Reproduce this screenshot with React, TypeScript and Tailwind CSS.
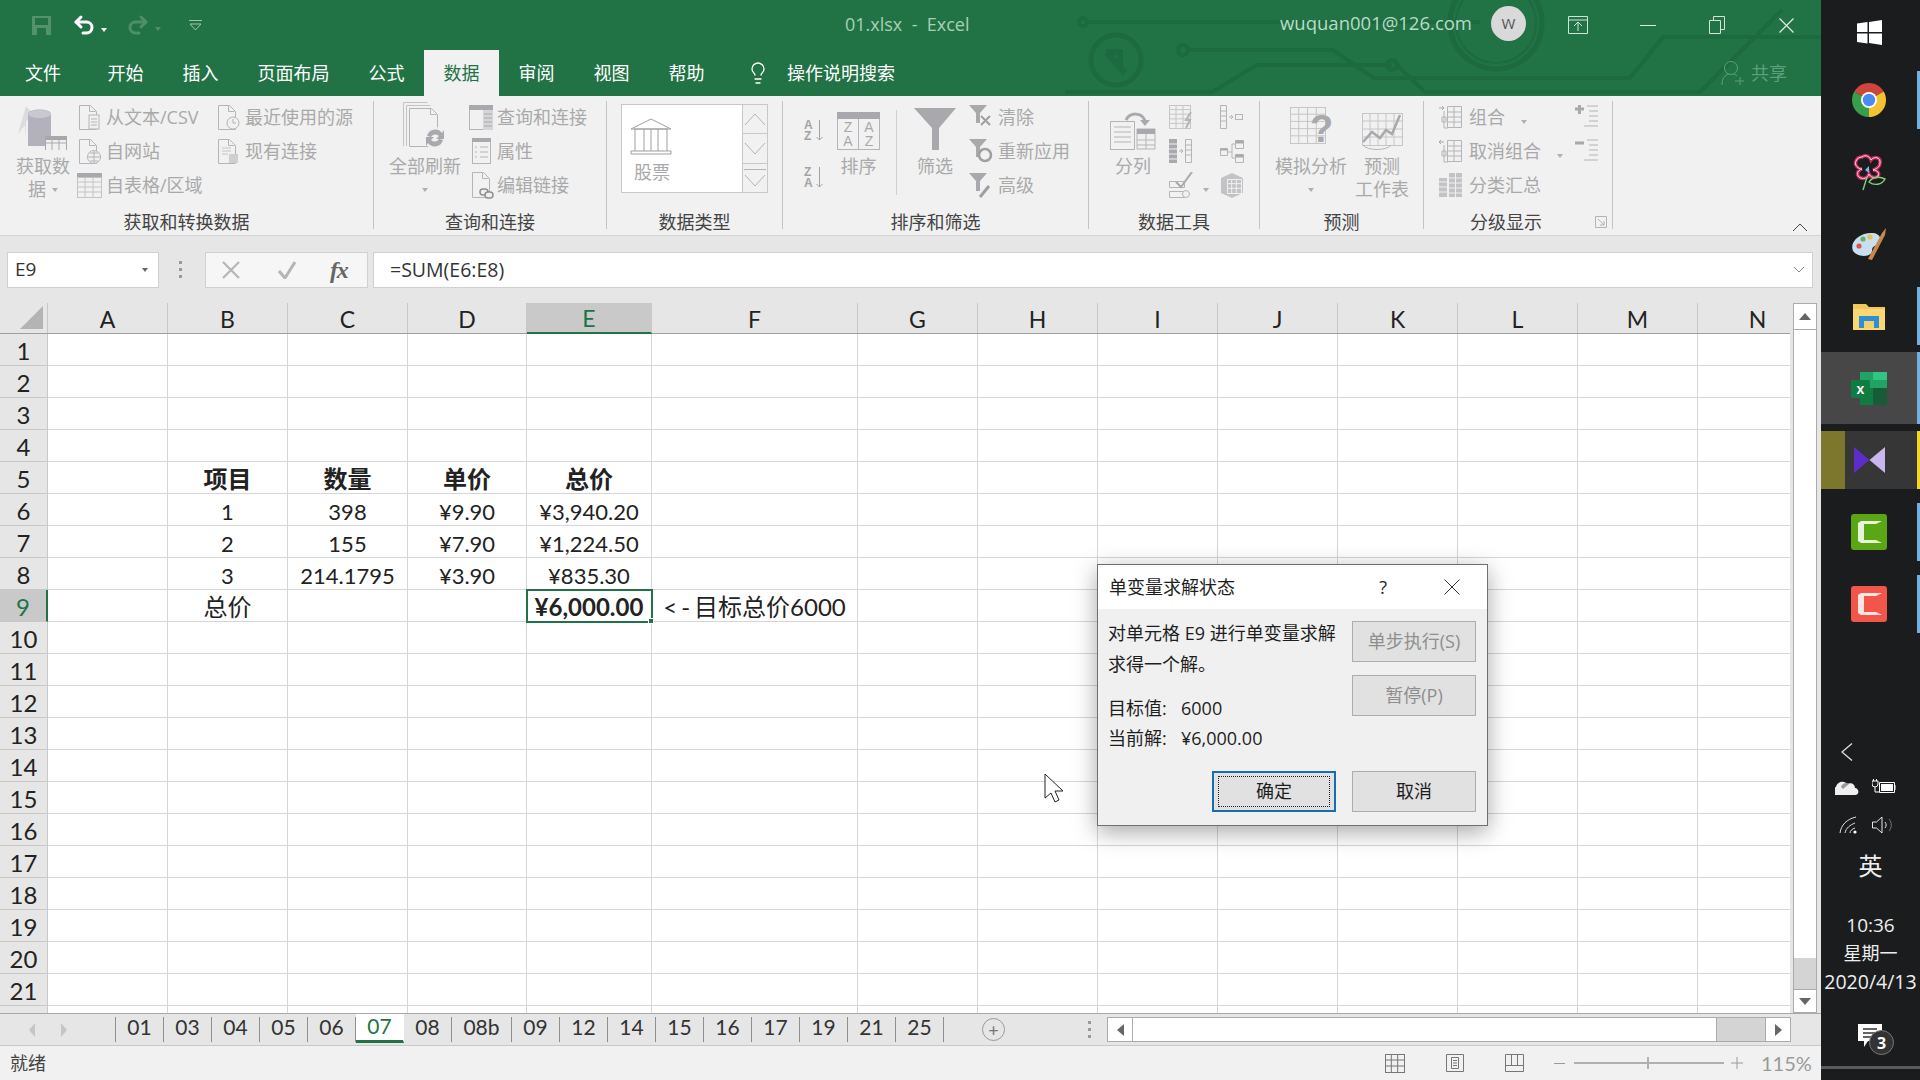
import type { ReactNode } from "react";
import { Lightbulb, Redo2, Undo2 } from "lucide-react";

const G = "#b5b5b8";
const L = "#c4c4c6";

function Svg({ w, h, children }: { w: number; h: number; children: ReactNode }) {
  return (
    <svg width={w} height={h} viewBox={`0 0 ${w} ${h}`} fill="none" className="block shrink-0">
      {children}
    </svg>
  );
}

function Page({ x = 0, y = 0, w = 17, h = 24, c = G }: { x?: number; y?: number; w?: number; h?: number; c?: string }) {
  return <path d={`M${x + 0.5} ${y + 0.5}h${w - 6}l6 6v${h - 6}h-${w}z M${x + w - 6.5} ${y + 0.5}v6h6`} stroke={c} />;
}

function Grid({ x, y, w, h, cols, rows, c = G }: { x: number; y: number; w: number; h: number; cols: number; rows: number; c?: string }) {
  const v = Array.from({ length: cols - 1 }, (_, i) => x + ((i + 1) * w) / cols);
  const r = Array.from({ length: rows - 1 }, (_, i) => y + ((i + 1) * h) / rows);
  return (
    <g stroke={c}>
      <rect x={x + 0.5} y={y + 0.5} width={w} height={h} />
      {v.map((n) => <path key={n} d={`M${n} ${y}v${h}`} />)}
      {r.map((n) => <path key={n} d={`M${x} ${n}h${w}`} />)}
    </g>
  );
}

function Caret({ c = "#b0b0b0" }: { c?: string }) {
  return <span className="inline-block w-0 h-0 border-x-[3.5px] border-x-transparent border-t-[4px]" style={{ borderTopColor: c }} />;
}

/* ribbon layout bits */
function Group({ className, label, children, launcher }: { className: string; label: string; children: ReactNode; launcher?: boolean }) {
  return (
    <div className={`${className} shrink-0 h-[128px] mt-[5px] border-r border-[#c4c4c4] flex flex-col`}>
      <div className="h-[102px] shrink-0 -mt-px flex">{children}</div>
      <div className="h-[27px] shrink-0 flex items-center pt-[13px] text-[18px] leading-none text-[#444]">
        <span className="flex-1 text-center">{label}</span>
        {launcher && (
          <span className="w-[24px] pl-[7px]">
            <Svg w={12} h={12}><path d="M.5.5h11v11H.5z M3 3l6 6 M9 5v4H5" stroke={G} /></Svg>
          </span>
        )}
      </div>
    </div>
  );
}

function Big({ className, icon, lines, caret }: { className: string; icon: ReactNode; lines: string[]; caret?: boolean }) {
  return (
    <div className={`${className} shrink-0 flex flex-col items-center text-[18px] leading-[23px] text-[#a9a9a9]`}>
      <div className="h-[55px] flex items-end justify-center pb-[5px]">{icon}</div>
      {lines.map((t) => (
        <span key={t} className="whitespace-nowrap flex items-center gap-[6px]">
          {t}
          {caret && t === lines[lines.length - 1] && lines.length > 1 && <Caret />}
        </span>
      ))}
      {caret && lines.length === 1 && <span className="h-[23px] flex items-center"><Caret /></span>}
    </div>
  );
}

function Col({ className, children }: { className: string; children: ReactNode }) {
  return <div className={`${className} shrink-0 flex flex-col`}>{children}</div>;
}

function Small({ box, icon, text, after }: { box: string; icon: ReactNode; text?: string; after?: ReactNode }) {
  return (
    <div className="h-[34px] flex items-center text-[18px] text-[#a9a9a9] whitespace-nowrap">
      <span className={`${box} shrink-0 flex items-center`}>{icon}</span>
      {text}
      {after}
    </div>
  );
}

/* ribbon icons */
const GetData = (
  <Svg w={50} h={44}>
    <path d="M8 0L0 28l7-9 1 14V16l7-9z" fill="#dcdcde" />
    <path d="M10 8c0-6 23-6 23 0v32H10z" fill="#b3b1bb" />
    <ellipse cx="21.5" cy="8" rx="11.5" ry="4" fill="#c9c8cf" />
    <rect x="27" y="30" width="22" height="14" fill="#f0f0f0" />
    <path d="M27 30h22v4H27z" fill="#a6a6ab" />
    <Grid x={27} y={30} w={21} h={14} cols={3} rows={2} c="#a9a9ad" />
  </Svg>
);
const DocLines = (
  <Svg w={22} h={26}>
    <Page x={0} y={1} w={17} h={24} />
    <rect x="10" y="11" width="10" height="14" fill="#f0f0f0" stroke={G} />
    <path d="M12 15h6M12 18h6M12 21h6" stroke={G} />
  </Svg>
);
const DocWeb = (
  <Svg w={22} h={26}>
    <Page x={0} y={1} w={17} h={24} />
    <circle cx="15" cy="19" r="6.5" fill="#f0f0f0" stroke={G} />
    <path d="M8.5 19h13M15 12.5v13M11 15h8M11 23h8" stroke={G} />
  </Svg>
);
const TableIcon = (
  <Svg w={25} h={25}>
    <rect x=".5" y=".5" width="24" height="24" stroke={G} />
    <path d="M0 0h25v4H0z" fill="#a9a9ad" />
    <Grid x={0} y={4} w={24} h={20} cols={3} rows={4} c={L} />
  </Svg>
);
const DocClock = (
  <Svg w={22} h={26}>
    <Page x={0} y={1} w={17} h={24} />
    <circle cx="15" cy="19" r="6" fill="#f0f0f0" stroke={G} />
    <path d="M15 15v4h3" stroke={G} />
  </Svg>
);
const DocDb = (
  <Svg w={22} h={26}>
    <Page x={0} y={1} w={17} h={24} />
    <path d="M4 10h9M4 13h9M4 16h6" stroke={L} />
    <path d="M11 16h9v9h-9z" fill="#cfcfd2" />
  </Svg>
);
const Refresh = (
  <Svg w={44} h={48}>
    <path d="M.5 44V.5h24M3.5 44V3.5h24" stroke={L} />
    <Page x={6} y={6} w={28} h={38} />
    <circle cx="32" cy="36" r="11" fill="#f0f0f0" />
    <path d="M24 34a8.5 8.5 0 0 1 15-3l2-3v9h-8l3-3a5 5 0 0 0-8 1zM40 38a8.5 8.5 0 0 1-15 3l-2 3v-9h8l-3 3a5 5 0 0 0 8-1z" fill="#a9a9ad" />
  </Svg>
);
const QueryIcon = (
  <Svg w={24} h={25}>
    <rect x=".5" y=".5" width="23" height="24" stroke={G} />
    <path d="M0 0h24v5H0z" fill="#a9a9ad" />
    <path d="M14 5h10v20H14z" fill="#d6d6d8" />
    <path d="M15 9h8M15 13h8M15 17h8M15 21h8" stroke="#a9a9ad" />
  </Svg>
);
const PropsIcon = (
  <Svg w={19} h={26}>
    <rect x=".5" y=".5" width="18" height="25" stroke={G} />
    <path d="M0 0h19v4H0z" fill="#a9a9ad" />
    <path d="M3 9h2M8 9h8M3 14h2M8 14h8M3 19h2M8 19h8" stroke={G} />
  </Svg>
);
const DocLink = (
  <Svg w={22} h={28}>
    <Page x={0} y={1} w={17} h={25} />
    <rect x="8" y="18" width="8" height="6" rx="3" fill="#f0f0f0" stroke="#8f8f92" strokeWidth="1.5" />
    <rect x="13" y="21" width="8" height="6" rx="3" fill="#f0f0f0" stroke="#8f8f92" strokeWidth="1.5" />
  </Svg>
);
const Bank = (
  <Svg w={42} h={38}>
    <path d="M1 11L21 1l20 10zM4 11h34M1 36h40v-3H1zM5 33V11M37 33V11M14 33V11M28 33V11M21 33V11" stroke="#9f9f9f" />
  </Svg>
);
function AZ({ top, bottom }: { top: string; bottom: string }) {
  return (
    <Svg w={20} h={24}>
      <text x="0" y="11" fontSize="12" fontWeight="700" fill="#a3a3a3" fontFamily="Liberation Sans, sans-serif">{top}</text>
      <text x="0" y="22" fontSize="12" fontWeight="700" fill="#a3a3a3" fontFamily="Liberation Sans, sans-serif">{bottom}</text>
      <path d="M15.5 2v20M12.5 19l3 3 3-3" stroke="#a3a3a3" />
    </Svg>
  );
}
const SortBig = (
  <Svg w={43} h={38}>
    <rect x=".5" y=".5" width="42" height="37" stroke={G} />
    <path d="M0 0h43v7H0z" fill="#a9a9ad" />
    <path d="M21.5 7v30" stroke={G} />
    <g fontSize="14" fill="#a9a9ad" fontFamily="Liberation Sans, sans-serif" textAnchor="middle">
      <text x="11" y="20">Z</text><text x="11" y="34">A</text><text x="32" y="20">A</text><text x="32" y="34">Z</text>
    </g>
  </Svg>
);
const Funnel = (
  <Svg w={42} h={42}>
    <path d="M0 0h42L25 20v22h-7V20z" fill="#a9a9ad" />
  </Svg>
);
function SmallFunnel({ children }: { children?: ReactNode }) {
  return (
    <Svg w={24} h={26}>
      <path d="M0 1h18l-7 8v10H7V9z" fill="#a9a9ad" />
      {children}
    </Svg>
  );
}
const SplitCols = (
  <Svg w={46} h={38}>
    <rect x=".5" y="9.5" width="24" height="28" stroke={G} />
    <path d="M4 15h17M4 20h17M4 25h17M4 30h17" stroke={G} />
    <path d="M16 8C20 0 32 0 35 9" stroke="#a9a9ad" strokeWidth="3" />
    <path d="M30 8h10l-5 6z" fill="#a9a9ad" />
    <rect x="27" y="17" width="18" height="20" fill="#f0f0f0" stroke={G} />
    <path d="M27 17h18v5H27z" fill="#a9a9ad" />
    <path d="M36 22v15M27 28h18M27 33h18" stroke={G} />
  </Svg>
);
const FlashFill = (
  <Svg w={24} h={26}>
    <Grid x={0} y={1} w={21} h={23} cols={3} rows={5} c="#c6c6c8" />
    <path d="M22 8l-5 8h4l-4 8" stroke={G} strokeWidth="2" />
  </Svg>
);
const RemoveDup = (
  <Svg w={24} h={26}>
    <path d="M0 1h8v24H0z" fill="#a9a9ad" />
    <path d="M0 6h8M0 11h8M0 16h8M0 21h8" stroke="#f0f0f0" />
    <path d="M16.5 1.5h6v23h-6zM16 7h7M16 12h7M16 17h7" stroke={G} />
    <path d="M10 13h4M12 11l2 2-2 2" stroke={G} />
  </Svg>
);
const Validate = (
  <Svg w={24} h={26}>
    <path d="M.5 9.5h15v6H.5zM.5 19.5h15v6H.5z" stroke={G} />
    <path d="M7 10l5 5L23 0" stroke="#a9a9ad" strokeWidth="2" />
    <circle cx="17" cy="22" r="3.5" fill="#f0f0f0" stroke={G} />
  </Svg>
);
const Consolidate = (
  <Svg w={24} h={26}>
    <path d="M.5 1.5h6v23h-6zM0 7h7M0 12h7M0 17h7" stroke={G} />
    <path d="M9 13h4M11 11l2 2-2 2" stroke={G} />
    <rect x="15.5" y="10.5" width="7" height="5" stroke={G} />
  </Svg>
);
const Relation = (
  <Svg w={24} h={26}>
    <path d="M.5 10.5h7v7h-7zM15.5 2.5h8v8h-8zM15.5 16.5h8v8h-8z" stroke={G} />
    <path d="M15.5 2.5h8v3h-8zM15.5 16.5h8v3h-8zM.5 10.5h7v2h-7z" fill="#a9a9ad" />
    <path d="M8 14h4V6h3M12 14v6h3" stroke={G} />
  </Svg>
);
const Cube = (
  <Svg w={24} h={26}>
    <path d="M12 1l11 5v15l-11 5-11-5V6z" fill="#c3c3c6" />
    <Grid x={7} y={7} w={14} h={14} cols={3} rows={3} c="#f0f0f0" />
  </Svg>
);
const WhatIf = (
  <Svg w={43} h={44}>
    <Grid x={0} y={1} w={35} h={36} cols={4} rows={5} c="#c6c6c8" />
    <text x="20" y="36" fontSize="38" fontWeight="700" fill="#a9a9ad" fontFamily="Liberation Sans, sans-serif">?</text>
  </Svg>
);
const Forecast = (
  <Svg w={41} h={38}>
    <Grid x={0} y={1} w={40} h={32} cols={5} rows={4} c="#c6c6c8" />
    <path d="M1 30l9-10 8 6 6-8 6 4 8-19" stroke="#a9a9ad" strokeWidth="2.5" />
    <path d="M1 33c4 6 24 6 28 0" stroke={G} />
  </Svg>
);
function Outline({ plus }: { plus?: boolean }) {
  return (
    <Svg w={24} h={24}>
      <path d={plus ? "M0 3h5M3 1l2 2-2 2" : "M5 3H0M2 1L0 3l2 2"} stroke="#a9a9ad" />
      <path d="M8.5 1.5h14v21h-14zM15 1v22M9 7h14M9 12h14M9 17h14" stroke={G} />
      <path d="M5 6v17h4M3 12h4v5H3z" stroke={G} />
    </Svg>
  );
}
function Outline2({ plus }: { plus?: boolean }) {
  return (
    <Svg w={24} h={24}>
      {plus ? <path d="M0 4h9M4.5 0v9" stroke="#a9a9ad" strokeWidth="3" /> : <path d="M0 4h9" stroke="#a9a9ad" strokeWidth="3" />}
      <path d="M12 1h11M14 6h9M14 11h9M14 16h9M9 21h14" stroke={G} />
    </Svg>
  );
}
const Subtotal = (
  <Svg w={24} h={26}>
    <path d="M0 6h8v19H0z" fill="#c3c3c6" />
    <path d="M0 10h8M0 15h8M0 20h8" stroke="#f0f0f0" />
    <path d="M10 1h13v24H10z" fill="#c3c3c6" />
    <path d="M16.5 1v24M10 6h13M10 11h13M10 16h13M10 21h13" stroke="#f0f0f0" />
  </Svg>
);

function ArrowBtn({ dir, extra }: { dir: "up" | "down"; extra?: boolean }) {
  return (
    <div className={`flex-1 border-b border-[#c8c8c8] last:border-b-0 flex flex-col items-center justify-center ${extra ? "gap-[3px]" : ""}`}>
      {extra && <span className="w-[22px] h-px bg-[#b5b5b5]" />}
      <Svg w={24} h={14}><path d={dir === "up" ? "M2 13L12 2l10 11" : "M2 2l10 11L22 2"} stroke={G} /></Svg>
    </div>
  );
}

function Ribbon() {
  return (
    <div className="h-[140px] bg-[#f1f1f1] border-b border-[#d4d4d4] flex">
      <Group className="w-[374px]" label="获取和转换数据">
        <Big className="w-[54px] ml-[16px]" icon={GetData} lines={["获取数", "据"]} caret />
        <Col className="w-[139px] ml-[9px]">
          <Small box="w-[27px]" icon={DocLines} text="从文本/CSV" />
          <Small box="w-[27px]" icon={DocWeb} text="自网站" />
          <Small box="w-[27px] -ml-[2px] mr-[2px]" icon={TableIcon} text="自表格/区域" />
        </Col>
        <Col className="w-[130px]">
          <Small box="w-[27px]" icon={DocClock} text="最近使用的源" />
          <Small box="w-[27px]" icon={DocDb} text="现有连接" />
        </Col>
      </Group>
      <Group className="w-[233px]" label="查询和连接">
        <Big className="w-[72px] ml-[15px]" icon={Refresh} lines={["全部刷新"]} caret />
        <Col className="w-[125px] ml-[8px]">
          <Small box="w-[28px]" icon={QueryIcon} text="查询和连接" />
          <Small box="w-[28px] pl-[3px]" icon={PropsIcon} text="属性" />
          <Small box="w-[28px] pl-[3px]" icon={DocLink} text="编辑链接" />
        </Col>
      </Group>
      <Group className="w-[176px]" label="数据类型">
        <div className="ml-[14px] mt-[4px] h-[89px] w-[147px] flex">
          <div className="w-[122px] h-full bg-white border border-[#c8c8c8] flex flex-col items-start pl-[8px] pt-[13px] text-[18px] leading-[23px] text-[#a9a9a9]">
            {Bank}
            <span className="mt-[5px] ml-[4px]">股票</span>
          </div>
          <div className="w-[25px] h-full border border-l-0 border-[#c8c8c8] flex flex-col">
            <ArrowBtn dir="up" />
            <ArrowBtn dir="down" />
            <ArrowBtn dir="down" extra />
          </div>
        </div>
      </Group>
      <Group className="w-[306px]" label="排序和筛选">
        <div className="ml-[21px] mt-[18px] w-[20px] shrink-0 flex flex-col gap-[23px]">
          <AZ top="A" bottom="Z" />
          <AZ top="Z" bottom="A" />
        </div>
        <Big className="w-[43px] ml-[13px]" icon={SortBig} lines={["排序"]} />
        <div className="w-px h-[85px] mt-[10px] ml-[16px] bg-[#d0d0d0] shrink-0" />
        <Big className="w-[42px] ml-[17px]" icon={Funnel} lines={["筛选"]} />
        <Col className="w-[120px] ml-[11px]">
          <Small box="w-[31px] pl-[2px]" icon={<SmallFunnel><path d="M12 12l9 9M21 12l-9 9" stroke="#9f9f9f" strokeWidth="2" /></SmallFunnel>} text="清除" />
          <Small box="w-[31px] pl-[2px]" icon={<SmallFunnel><circle cx="16" cy="17" r="6" stroke="#9f9f9f" strokeWidth="2.5" /></SmallFunnel>} text="重新应用" />
          <Small box="w-[31px] pl-[2px]" icon={<SmallFunnel><path d="M11 25l9-11" stroke="#9f9f9f" strokeWidth="3" /></SmallFunnel>} text="高级" />
        </Col>
      </Group>
      <Group className="w-[171px]" label="数据工具">
        <Big className="w-[46px] ml-[21px]" icon={SplitCols} lines={["分列"]} />
        <Col className="w-[51px] ml-[13px]">
          <Small box="w-[24px]" icon={FlashFill} />
          <Small box="w-[24px]" icon={RemoveDup} />
          <Small box="w-[24px]" icon={Validate} after={<span className="ml-[10px]"><Caret /></span>} />
        </Col>
        <Col className="w-[24px]">
          <Small box="w-[24px]" icon={Consolidate} />
          <Small box="w-[24px]" icon={Relation} />
          <Small box="w-[24px]" icon={Cube} />
        </Col>
      </Group>
      <Group className="w-[164px]" label="预测">
        <Big className="w-[72px] ml-[15px]" icon={WhatIf} lines={["模拟分析"]} caret />
        <Big className="w-[54px] ml-[8px]" icon={Forecast} lines={["预测", "工作表"]} />
      </Group>
      <Group className="w-[189px]" label="分级显示" launcher>
        <Col className="w-[136px] ml-[15px]">
          <Small box="w-[30px]" icon={<Outline plus />} text="组合" after={<span className="ml-[16px]"><Caret /></span>} />
          <Small box="w-[30px]" icon={<Outline />} text="取消组合" after={<span className="ml-[16px]"><Caret /></span>} />
          <Small box="w-[30px]" icon={Subtotal} text="分类汇总" />
        </Col>
        <Col className="w-[24px]">
          <Small box="w-[24px]" icon={<Outline2 plus />} />
          <Small box="w-[24px]" icon={<Outline2 />} />
        </Col>
      </Group>
      <div className="flex-1 flex items-end justify-end pr-[13px] pb-[3px]">
        <Svg w={16} h={9}><path d="M1 8l7-7 7 7" stroke="#444" /></Svg>
      </div>
    </div>
  );
}

function Header() {
  const tabs = [
    { t: "开始", c: "" },
    { t: "插入", c: "" },
    { t: "页面布局", c: "" },
    { t: "公式", c: "" },
    { t: "数据", c: "bg-[#f1f1f1] text-[#217346]" },
    { t: "审阅", c: "" },
    { t: "视图", c: "" },
    { t: "帮助", c: "" },
  ];
  return (
    <div className="relative h-[96px] bg-[#217346] text-white shrink-0 overflow-hidden">
      {/* circuit pattern of the Office theme */}
      <svg className="absolute inset-0" width="1821" height="96" fill="none" stroke="#1d6a40" strokeWidth="4">
        <circle cx="1083" cy="22" r="4" />
        <path d="M1087 22H1480" />
        <circle cx="1116" cy="60" r="25" strokeWidth="5" />
        <path d="M1106 52h14v14M1107 53l18 20" strokeWidth="6" />
        <circle cx="1183" cy="50" r="5" />
        <path d="M1188 50H1333L1374 78H1630L1663 37H1821" />
        <path d="M1065 92H1212L1257 65H1392" />
        <circle cx="1392" cy="65" r="5" />
        <path d="M1397 65L1425 92H1700L1782 10" />
        <circle cx="1496" cy="23" r="46" strokeWidth="5" />
        <circle cx="1496" cy="23" r="40" strokeWidth="2" />
      </svg>
      <div className="relative h-[50px] flex items-center">
        <div className="w-[32px] shrink-0" />
        <Svg w={19} h={19}>
          <path d="M0 0h19v19H0z" fill="#54926e" />
          <path d="M3 2h13v7H3z" fill="#217346" />
          <path d="M5 12h9v7H5z" fill="#217346" />
        </Svg>
        <Undo2 className="ml-[21px] w-[24px] h-[24px]" strokeWidth={3} />
        <span className="ml-[5px] mt-[1px]"><Caret c="#fff" /></span>
        <Redo2 className="ml-[19px] w-[24px] h-[24px] text-[#4c8f69]" strokeWidth={3} />
        <span className="ml-[5px]"><Caret c="#4c8f69" /></span>
        <span className="ml-[28px]">
          <Svg w={13} h={10}><path d="M0 .5h13M1 4h11L6.5 10z" stroke="#9cc4ad" /></Svg>
        </span>
        <span className="ml-[643px] mb-[2px] w-[127px] text-[18px] text-[#a5d0b5] whitespace-pre">01.xlsx  -  Excel</span>
        <span className="ml-[308px] mb-[4px] w-[194px] text-[18.5px] text-[#b8dcc6]">wuquan001@126.com</span>
        <span className="ml-[17px] w-[35px] h-[35px] mb-[4px] rounded-full bg-[#d9d9d9] text-[#555] text-[15px] flex items-center justify-center">W</span>
        <span className="ml-[42px]">
          <Svg w={20} h={18}><path d="M.5.5h19v17H.5zM0 4h20M10 15V7M6 10l4-4 4 4" stroke="#cfe5d8" /></Svg>
        </span>
        <span className="ml-[52px] w-[16px] h-px bg-[#d5e8dd]" />
        <span className="ml-[53px]">
          <Svg w={16} h={18}><path d="M.5 4.5h11v13H.5zM4.5 4V.5h11v13H12" stroke="#cfe5d8" /></Svg>
        </span>
        <span className="ml-[54px]">
          <Svg w={15} h={15}><path d="M.5.5l14 14M14.5.5l-14 14" stroke="#e0eee6" strokeWidth="1.2" /></Svg>
        </span>
      </div>
      <div className="relative h-[46px] flex text-[18px]">
        <span className="ml-[6px] px-[19px] flex items-center">文件</span>
        <div className="ml-[8px] flex">
          {tabs.map((tab) => (
            <span key={tab.t} className={`px-[19.5px] flex items-center whitespace-nowrap ${tab.c}`}>{tab.t}</span>
          ))}
        </div>
        <div className="ml-[22px] flex items-center">
          <Lightbulb className="w-[24px] h-[26px]" strokeWidth={1.3} />
          <span className="ml-[17px] whitespace-nowrap">操作说明搜索</span>
        </div>
        <div className="ml-[826px] flex items-center text-[#5f9e7b]">
          <Svg w={24} h={26}>
            <circle cx="10" cy="8" r="6.5" stroke="#5f9e7b" />
            <path d="M1 25c0-7 3-10 7-11M13 14l3 2M14 21h9M19 17v8" stroke="#5f9e7b" />
          </Svg>
          <span className="ml-[6px]">共享</span>
        </div>
      </div>
    </div>
  );
}

function FormulaBar() {
  return (
    <div className="h-[67px] bg-[#e6e6e6] shrink-0 flex items-center text-[#333] pl-[7px] pr-[8px]">
      <div className="w-[152px] h-[36px] bg-white border border-[#d0d0d0] flex items-center justify-between pl-[7px] pr-[10px] text-[19px]">
        E9 <Caret c="#666" />
      </div>
      <div className="w-[42px] mr-[4px] flex flex-col items-center gap-[4px]">
        <span className="w-[3px] h-[3px] bg-[#9a9a9a]" />
        <span className="w-[3px] h-[3px] bg-[#9a9a9a]" />
        <span className="w-[3px] h-[3px] bg-[#9a9a9a]" />
      </div>
      <div className="w-[163px] h-[36px] bg-[#f6f6f6] border border-[#d0d0d0] flex items-center pl-[16px]">
        <Svg w={18} h={18}><path d="M1 1l16 16M17 1L1 17" stroke="#b5b5b5" strokeWidth="2.2" /></Svg>
        <span className="ml-[38px]">
          <Svg w={18} h={18}><path d="M1 10l6 7L17 1" stroke="#b5b5b5" strokeWidth="3" /></Svg>
        </span>
        <span className="ml-[34px] font-['Liberation_Serif',serif] italic text-[24px] font-bold text-[#666] tracking-tighter">fx</span>
      </div>
      <div className="ml-[5px] flex-1 h-[36px] bg-white border border-[#d0d0d0] flex items-center justify-between pl-[16px] pr-[7px] text-[19.5px]">
        <span>=SUM(E6:E8)</span>
        <Svg w={12} h={7}><path d="M1 1l5 5 5-5" stroke="#8a8a8a" /></Svg>
      </div>
    </div>
  );
}

const COLS = [
  { l: "A", w: "w-[120px]" },
  { l: "B", w: "w-[120px]" },
  { l: "C", w: "w-[120px]" },
  { l: "D", w: "w-[119px]" },
  { l: "E", w: "w-[125px]" },
  { l: "F", w: "w-[206px]" },
  { l: "G", w: "w-[120px]" },
  { l: "H", w: "w-[120px]" },
  { l: "I", w: "w-[120px]" },
  { l: "J", w: "w-[120px]" },
  { l: "K", w: "w-[120px]" },
  { l: "L", w: "w-[120px]" },
  { l: "M", w: "w-[120px]" },
  { l: "N", w: "w-[120px]" },
];

const CELLS: Record<string, string> = {
  B5: "项目", C5: "数量", D5: "单价", E5: "总价",
  B6: "1", C6: "398", D6: "¥9.90", E6: "¥3,940.20",
  B7: "2", C7: "155", D7: "¥7.90", E7: "¥1,224.50",
  B8: "3", C8: "214.1795", D8: "¥3.90", E8: "¥835.30",
  B9: "总价", E9: "¥6,000.00",
};

function Sheet() {
  const rows = Array.from({ length: 22 }, (_, i) => i + 1);
  return (
    <div className="h-[710px] shrink-0 flex bg-[#e6e6e6]">
      <div className="w-[1790px] h-full overflow-hidden bg-white font-['Lato','Noto_Sans_CJK_SC',sans-serif] text-[22px] text-[#222]">
        <div className="flex h-[31px] bg-[#e6e6e6] border-b border-[#9e9e9e]">
          <div className="w-[48px] shrink-0 border-r border-[#c8c8c8] flex items-end justify-end pr-[4px] pb-[4px]">
            <span className="w-0 h-0 border-b-[23px] border-l-[23px] border-b-[#b4b4b4] border-l-transparent" />
          </div>
          {COLS.map((c) => (
            <div
              key={c.l}
              className={`${c.w} shrink-0 flex items-center justify-center pt-[2px] text-[23px] border-r border-[#c8c8c8] ${c.l === "E" ? "bg-[#c9c9c9] text-[#217346] border-b-[2px] border-b-[#217346] h-[31px]" : ""}`}
            >
              {c.l}
            </div>
          ))}
        </div>
        {rows.map((r) => (
          <div key={r} className="flex h-[32px]">
            <div className={`w-[48px] shrink-0 flex items-center justify-center pt-[3px] border-b border-r border-[#c8c8c8] text-[24px] ${r === 9 ? "bg-[#c9c9c9] text-[#217346] border-r-[2px] border-r-[#217346]" : "bg-[#e6e6e6]"}`}>
              {r < 22 ? r : null}
            </div>
            {COLS.map((c) => {
              const id = `${c.l}${r}`;
              const selected = id === "E9";
              const cjk = r === 5 || id === "B9";
              return (
                <div
                  key={id}
                  className={`${c.w} relative shrink-0 flex items-center justify-center pt-[3px] border-r border-b border-[#d6d6d6] whitespace-nowrap ${cjk ? "text-[24px]" : ""} ${r === 5 ? "font-bold" : ""} ${selected ? "text-[24px] font-bold outline-2 -outline-offset-1 outline-[#217346] z-10" : ""}`}
                >
                  {id === "F9" ? (
                    <span className="text-[24px]"><span className="tracking-[4px]">&lt;-</span>目标总价6000</span>
                  ) : (
                    CELLS[id]
                  )}
                  {selected && <span className="absolute -right-[3px] -bottom-[3px] w-[6px] h-[6px] bg-[#217346] border border-white" />}
                </div>
              );
            })}
          </div>
        ))}
      </div>
      <div className="ml-[3px] w-[24px] h-full flex flex-col border-x border-[#ababab]">
        <div className="h-[27px] bg-white border-y border-[#ababab] flex items-center justify-center">
          <span className="w-0 h-0 border-x-[6px] border-x-transparent border-b-[7px] border-b-[#666]" />
        </div>
        <div className="h-[628px] bg-white" />
        <div className="flex-1 bg-[#d4d4d4]" />
        <div className="h-[24px] bg-white border-y border-[#ababab] flex items-center justify-center">
          <span className="w-0 h-0 border-x-[6px] border-x-transparent border-t-[7px] border-t-[#666]" />
        </div>
      </div>
    </div>
  );
}

const SHEETS = ["01", "03", "04", "05", "06", "07", "08", "08b", "09", "12", "14", "15", "16", "17", "19", "21", "25"];

function SheetTabs() {
  return (
    <div className="h-[33px] shrink-0 bg-[#e6e6e6] border-y border-y-[#a8a8a8] border-b-[#c8c8c8] flex items-stretch font-['Lato','Noto_Sans_CJK_SC',sans-serif] text-[21px] text-[#333]">
      <div className="w-[115px] shrink-0 flex items-center pl-[29px] gap-[26px]">
        <span className="w-0 h-0 border-y-[7px] border-y-transparent border-r-[6px] border-r-[#c6c6c6]" />
        <span className="w-0 h-0 border-y-[7px] border-y-transparent border-l-[6px] border-l-[#c6c6c6]" />
      </div>
      <div className="flex border-l border-[#8f8f8f] my-[3px] h-[25px]">
        {SHEETS.map((s) => (
          <div
            key={s}
            className={`shrink-0 flex items-center justify-center border-r ${s === "08b" ? "w-[60px]" : "w-[48px]"} ${s === "07" ? "-mt-[3px] h-[29px] pb-[2px] bg-white text-[#217346] border-b-[3px] border-b-[#217346] border-r-transparent" : "h-[25px] pb-[5px] border-[#8f8f8f]"}`}
          >
            {s}
          </div>
        ))}
      </div>
      <div className="ml-[38px] mt-[4px] w-[23px] h-[23px] rounded-full border border-[#9a9a9a] flex items-center justify-center text-[#777] text-[18px] leading-none shrink-0">+</div>
      <div className="ml-[83px] flex flex-col justify-center gap-[4px]">
        <span className="w-[3px] h-[3px] bg-[#9a9a9a]" />
        <span className="w-[3px] h-[3px] bg-[#9a9a9a]" />
        <span className="w-[3px] h-[3px] bg-[#9a9a9a]" />
      </div>
      <div className="ml-[16px] w-[684px] h-[25px] mt-[3px] flex border border-[#ababab]">
        <div className="w-[25px] bg-white border-r border-[#ababab] flex items-center justify-center">
          <span className="w-0 h-0 border-y-[6px] border-y-transparent border-r-[7px] border-r-[#666]" />
        </div>
        <div className="w-[584px] bg-white border-r border-[#ababab]" />
        <div className="flex-1 bg-[#d4d4d4]" />
        <div className="w-[25px] bg-white border-l border-[#ababab] flex items-center justify-center">
          <span className="w-0 h-0 border-y-[6px] border-y-transparent border-l-[7px] border-l-[#666]" />
        </div>
      </div>
    </div>
  );
}

function StatusBar() {
  return (
    <div className="flex-1 bg-[#f1f1f1] flex items-center pl-[10px] text-[18px] text-[#444]">
      <span>就绪</span>
      <span className="ml-[1339px]">
        <Svg w={20} h={20}><Grid x={0} y={1} w={19} h={18} cols={3} rows={3} c="#777" /></Svg>
      </span>
      <span className="ml-[41px]">
        <Svg w={18} h={20}><path d="M.5 1.5h17v17H.5zM5.5 4.5h7v11h-7zM7 7.5h4M7 10h4M7 12.5h4" stroke="#777" /></Svg>
      </span>
      <span className="ml-[41px]">
        <Svg w={20} h={20}><path d="M.5 1.5h18v17H.5zM.5 12.5h18M6.5 1v11M12.5 1v11" stroke="#777" /></Svg>
      </span>
      <span className="ml-[29px] w-[11px] h-px bg-[#9a9a9a]" />
      <div className="ml-[9px] w-[150px] h-[2px] bg-[#b0b0b0] relative">
        <span className="absolute left-[73px] -top-[5px] w-[2px] h-[12px] bg-[#b0b0b0]" />
      </div>
      <span className="ml-[7px]">
        <Svg w={12} h={12}><path d="M6 0v12M0 6h12" stroke="#9a9a9a" /></Svg>
      </span>
      <span className="ml-[18px] font-['Lato',sans-serif] text-[20px] text-[#9a9a9a]">115%</span>
    </div>
  );
}

function Dialog() {
  const disabled = "w-[124px] h-[41px] bg-[#e1e1e1] border border-[#adadad] flex items-center justify-center text-[#8e8e8e]";
  return (
    <div className="absolute left-[1097px] top-[564px] w-[391px] h-[262px] bg-[#f0f0f0] border border-[#6f6f6f] shadow-[0_6px_22px_rgba(0,0,0,0.35)] text-[18px] text-[#1e1e1e] z-20 font-['Open_Sans','Noto_Sans_CJK_SC',sans-serif]">
      <div className="h-[44px] bg-white flex items-center pl-[11px]">
        <span className="flex-1">单变量求解状态</span>
        <span className="mr-[57px]">?</span>
        <span className="mr-[27px]">
          <Svg w={16} h={16}><path d="M.5.5l15 15M15.5.5l-15 15" stroke="#333" /></Svg>
        </span>
      </div>
      <div className="h-[162px] flex">
        <div className="w-[254px] pl-[10px] pt-[8px]">
          <p className="h-[32px] leading-[32px] whitespace-pre">对单元格 E9 进行单变量求解</p>
          <p className="h-[31px] leading-[31px]">求得一个解。</p>
          <div className="mt-[13px] h-[30px] flex items-center"><span className="w-[73px]">目标值:</span>6000</div>
          <div className="h-[30px] flex items-center"><span className="w-[73px]">当前解:</span>¥6,000.00</div>
        </div>
        <div className="pt-[12px] flex flex-col gap-[13px]">
          <div className={disabled}>单步执行(S)</div>
          <div className={disabled}>暂停(P)</div>
        </div>
      </div>
      <div className="flex justify-end gap-[16px] pr-[11px]">
        <div className="w-[124px] h-[41px] bg-[#e1e1e1] border-[2px] border-[#1a6cb0] flex items-center justify-center">
          <div className="w-[112px] h-[31px] border border-dotted border-[#222] flex items-center justify-center">确定</div>
        </div>
        <div className="w-[124px] h-[41px] bg-[#e1e1e1] border border-[#adadad] flex items-center justify-center">取消</div>
      </div>
    </div>
  );
}

function Slot({ tone, bar, children, left }: { tone?: string; bar?: string; children: ReactNode; left?: boolean }) {
  return (
    <div className="h-[72px] flex items-center">
      <div className={`w-full h-[58px] flex ${tone ?? ""}`}>
        {left && <span className="w-[24px] h-full bg-[#7c772c] -mr-[24px]" />}
        <div className="flex-1 flex items-center justify-center">{children}</div>
        <span className={`w-[3px] h-full ${bar ?? ""}`} />
      </div>
    </div>
  );
}

function Taskbar() {
  return (
    <div className="w-[99px] h-full shrink-0 bg-[#1b1c1e] flex flex-col text-white font-['Open_Sans','Noto_Sans_CJK_SC',sans-serif]">
      <div className="h-[64px] flex items-center justify-center pr-[3px]">
        <Svg w={25} h={25}>
          <path d="M0 3.6l10.5-1.5V12H0zM12 1.9L25 0v12H12zM0 13.5h10.5v10L0 22zM12 13.5h13V25l-13-1.9z" fill="#fff" />
        </Svg>
      </div>
      <Slot bar="bg-[#76b0e0]">
        <Svg w={34} h={34}>
          <path d="M17 17L2.3 8.5A17 17 0 0 1 31.7 8.5z" fill="#d0453a" />
          <path d="M17 17L31.7 8.5A17 17 0 0 1 17 34z" fill="#f2c230" />
          <path d="M17 17L17 34A17 17 0 0 1 2.3 8.5z" fill="#3a9d4c" />
          <circle cx="17" cy="17" r="8" fill="#fff" />
          <circle cx="17" cy="17" r="6.2" fill="#4a8bf0" />
        </Svg>
      </Slot>
      <Slot>
        <Svg w={34} h={37}>
          <path d="M10 3c4-3 8 0 9 3 3-4 10-3 9 3 0 4-4 6-7 7 4 0 7 3 5 6-3 3-8 1-9-2-1 4-6 6-10 3-3-3-1-7 3-8-4 0-8-4-6-8 1-3 4-4 6-4z" stroke="#c82b5c" strokeWidth="3.5" />
          <path d="M10 3c4-3 8 0 9 3 3-4 10-3 9 3 0 4-4 6-7 7 4 0 7 3 5 6-3 3-8 1-9-2-1 4-6 6-10 3-3-3-1-7 3-8-4 0-8-4-6-8 1-3 4-4 6-4z" stroke="#f4d9e2" strokeWidth="1" />
          <path d="M17 12l-4 4 4 3z" fill="#6fb7e8" />
          <path d="M15 23l-4 13M17 28c3-5 10-6 16-3-3 6-11 7-16 3z" stroke="#7fd07a" strokeWidth="1.4" />
        </Svg>
      </Slot>
      <Slot>
        <Svg w={36} h={34}>
          <path d="M2 24C-2 14 10 5 22 6c8 1 9 7 5 11-4 3-6 2-6 7 0 6-14 7-19 0z" fill="#c9dff0" />
          <circle cx="8" cy="19" r="2.6" fill="#d9534f" />
          <circle cx="12" cy="12" r="2.6" fill="#66b266" />
          <circle cx="19" cy="10" r="2.6" fill="#e8c34a" />
          <path d="M17 32L31 6l4-5-1 7-13 25z" fill="#c8884a" />
        </Svg>
      </Slot>
      <Slot bar="bg-[#76b0e0]">
        <Svg w={32} h={28}>
          <path d="M0 2h13l3 3h16v23H0z" fill="#f0c85a" />
          <path d="M0 7h32v21H0z" fill="#fbd873" />
          <path d="M6 14h20v12H6z" fill="#2f8fd4" />
          <path d="M11 19h10v7H11z" fill="#f4d06a" />
        </Svg>
      </Slot>
      <div className="h-[72px] bg-[#474747] flex">
        <div className="flex-1 flex items-center justify-center">
          <Svg w={36} h={33}>
            <path d="M9 0h27v33H9z" fill="#21a366" />
            <path d="M22 0h14v8H22z" fill="#33c481" />
            <path d="M9 16h27v17H9z" fill="#107c41" />
            <path d="M22 16h14v17H22z" fill="#185c37" />
            <rect x="0" y="8" width="19" height="18" rx="1.5" fill="#107c41" />
            <text x="9.5" y="22" fontSize="14" fontWeight="700" fill="#fff" textAnchor="middle" fontFamily="Liberation Sans, sans-serif">x</text>
          </Svg>
        </div>
        <span className="w-[3px] bg-[#76b0e0]" />
      </div>
      <Slot tone="bg-[#363636]" bar="bg-[#f3d81d]" left>
        <Svg w={31} h={26}>
          <path d="M0 0l15.5 13L0 26z" fill="#5c2dc9" />
          <path d="M31 0L15.5 13 31 26z" fill="#c9b6ee" />
        </Svg>
      </Slot>
      <Slot bar="bg-[#76b0e0]">
        <Svg w={36} h={36}>
          <rect width="36" height="36" rx="3" fill="#5aa615" />
          <path d="M31 7H10L7 9v18l3 2h21l-6-3H13V10h12z" fill="#e6f3d6" />
        </Svg>
      </Slot>
      <Slot bar="bg-[#76b0e0]">
        <Svg w={36} h={36}>
          <rect width="36" height="36" rx="3" fill="#f2564a" />
          <path d="M31 7H10L7 9v18l3 2h21l-6-3H13V10h12z" fill="#fde6e2" />
        </Svg>
      </Slot>
      <div className="mt-[103px] pl-[20px]">
        <Svg w={12} h={18}><path d="M11 .5L1 9l10 8.5" stroke="#e6e6e6" strokeWidth="1.2" /></Svg>
      </div>
      <div className="mt-[18px] pl-[14px] flex items-center h-[16px]">
        <Svg w={25} h={15}>
          <path d="M2 15a4 4 0 0 1-1-8c1-5 8-7 11-3 4-2 8 0 8 4 4 0 5 7 0 7z" fill="#f0f0f0" />
          <path d="M6 7c1-4 6-5 8-3l-6 5z" fill="#9a9a9a" />
        </Svg>
        <span className="ml-[12px]">
          <Svg w={24} h={16}>
            <path d="M0 2v3a3 3 0 0 0 6 0V2zM3 8v5h4M1.5 0v2M4.5 0v2" stroke="#fff" />
            <path d="M7.5 3.5h15v10h-15z" stroke="#fff" />
            <path d="M9 5h12v7H9z" fill="#fff" />
            <path d="M23 6v5" stroke="#fff" />
          </Svg>
        </span>
      </div>
      <div className="mt-[21px] pl-[18px] flex items-center h-[18px]">
        <Svg w={19} h={18}>
          <path d="M1 17C2 9 8 3 17 1M6 17c1-5 5-8 10-10M11 17c0-2 2-4 5-5" stroke="#e0e0e0" />
          <circle cx="16" cy="16" r="1.6" fill="#fff" />
        </Svg>
        <span className="ml-[14px]">
          <Svg w={22} h={18}>
            <path d="M.5 6h4L10 1v16l-5.5-5H.5z" stroke="#e6e6e6" />
            <path d="M13 6c1.5 2 1.5 4 0 6" stroke="#e6e6e6" />
            <path d="M17 3c3 3 3 9 0 12" stroke="#777" />
          </Svg>
        </span>
      </div>
      <div className="mt-[16px] h-[32px] text-center text-[24px] leading-[32px] text-[#eee]">英</div>
      <div className="mt-[29px] h-[28px] text-center text-[19px] leading-[28px] text-[#eee]">10:36</div>
      <div className="h-[29px] text-center text-[18px] leading-[29px] text-[#eee]">星期一</div>
      <div className="h-[28px] text-center text-[19.5px] leading-[28px] text-[#eee] whitespace-nowrap">2020/4/13</div>
      <div className="mt-[28px] h-[32px] pl-[37px] relative">
        <Svg w={24} h={25}>
          <path d="M0 0h24v17H10l-4 6v-6H0z" fill="#fff" />
          <path d="M5 5h14M5 9h14M5 13h9" stroke="#333" strokeWidth="1.3" />
        </Svg>
        <span className="absolute left-[48px] top-[6px] w-[25px] h-[25px] rounded-full bg-[#333] border border-[#777] flex items-center justify-center text-[16px] font-bold leading-none">3</span>
      </div>
      <div className="mt-[10px] h-[3px] bg-[#5a5a5a]" />
    </div>
  );
}

export default function App() {
  return (
    <div className="relative w-[1920px] h-[1080px] overflow-hidden flex bg-white font-['Open_Sans','Noto_Sans_CJK_SC',sans-serif]">
      <div className="w-[1821px] h-full flex flex-col shrink-0">
        <Header />
        <Ribbon />
        <FormulaBar />
        <Sheet />
        <SheetTabs />
        <StatusBar />
      </div>
      <Taskbar />
      <Dialog />
      <svg className="absolute left-[1044px] top-[773px] z-30" width="20" height="30" viewBox="0 0 20 30" fill="#fff" stroke="#222">
        <path d="M1 1v24l6-5 4 9 4-2-4-9h8z" />
      </svg>
    </div>
  );
}
